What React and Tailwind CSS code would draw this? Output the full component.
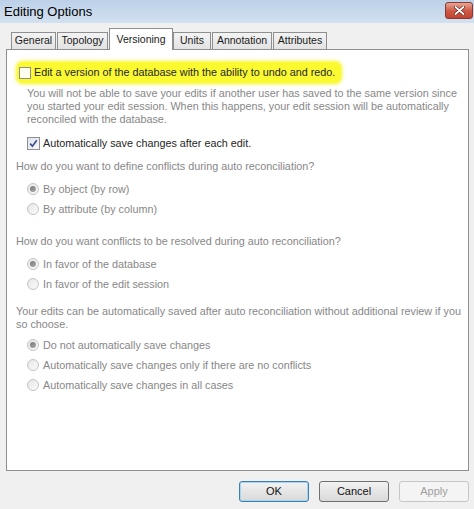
import React from "react";

const F = { fontFamily: '"Liberation Sans", Arial, sans-serif' };

function Radio({ checked }) {
  return (
    <span className="relative inline-flex h-[12px] w-[12px] shrink-0 items-center justify-center rounded-full border border-[#c4c4c4] bg-gradient-to-br from-[#e6e6e6] to-[#fbfbfb]">
      {checked && (
        <span className="h-[6px] w-[6px] rounded-full bg-gradient-to-br from-[#767676] to-[#adadad]" />
      )}
    </span>
  );
}

function Tab({ label, w, selected }) {
  if (selected) {
    return (
      <div
        className={`relative z-10 -mb-px flex h-[22px] items-start justify-center border border-b-0 border-[#8e8f8f] bg-white pt-[3px] text-[10.5px] text-[#1a1a1a] ${w}`}
      >
        {label}
      </div>
    );
  }
  return (
    <div
      className={`flex h-[17px] items-center justify-center border border-b-0 border-[#8e8f8f] bg-gradient-to-b from-[#f3f3f3] to-[#e3e3e3] text-[10.5px] text-[#1a1a1a] ${w}`}
    >
      {label}
    </div>
  );
}

function Btn({ children, variant }) {
  const base =
    "flex h-[21px] w-[70px] items-center justify-center rounded-[3px] border text-[11px]";
  if (variant === "default")
    return (
      <div className={`${base} border-[#3c7fb1] bg-gradient-to-b from-[#f2f2f2] to-[#d9d9d9] text-[#111] shadow-[inset_0_0_0_1px_#a9d4f0]`}>
        {children}
      </div>
    );
  if (variant === "disabled")
    return (
      <div className={`${base} border-[#c6c6c6] bg-[#f4f4f4] text-[#a0a0a0]`}>
        {children}
      </div>
    );
  return (
    <div className={`${base} border-[#707070] bg-gradient-to-b from-[#f2f2f2] to-[#d9d9d9] text-[#111]`}>
      {children}
    </div>
  );
}

export default function App() {
  const gray = "text-[#878787]";
  const dark = "text-[#262626]";
  return (
    <div
      style={F}
      className="flex h-[509px] w-[474px] flex-col overflow-hidden bg-[#f0f0f0]"
    >
      {/* title bar */}
      <div className="flex h-[23px] shrink-0 items-center justify-between bg-gradient-to-b from-[#bcd1e8] to-[#d3e1f0] pl-[4px] pr-[1px]">
        <span className="text-[13px] text-black">Editing Options</span>
        <div className="mt-[-3px] flex h-[17px] w-[28px] items-center justify-center rounded-[3px] border border-[#8a3a30] bg-gradient-to-b from-[#e5a596] via-[#cf5a48] to-[#c2442f]">
          <svg width="11" height="9" viewBox="0 0 11 9">
            <path d="M1.5 1 L9.5 8 M9.5 1 L1.5 8" stroke="#5a1b12" strokeWidth="3" strokeLinecap="round" />
            <path d="M1.5 1 L9.5 8 M9.5 1 L1.5 8" stroke="#ffffff" strokeWidth="1.8" strokeLinecap="round" />
          </svg>
        </div>
      </div>

      {/* tabs */}
      <div className="mt-[5px] flex items-end pl-[11px]">
        <Tab label="General" w="w-[45px]" />
        <div className="w-px" />
        <Tab label="Topology" w="w-[51px]" />
        <div className="w-[1px]" />
        <Tab label="Versioning" w="w-[64px]" selected />
        <Tab label="Units" w="w-[38px]" />
        <div className="w-[1px]" />
        <Tab label="Annotation" w="w-[60px]" />
        <div className="w-[1px]" />
        <Tab label="Attributes" w="w-[54px]" />
      </div>

      {/* panel */}
      <div className="ml-[6px] flex h-[422px] w-[463px] shrink-0 flex-col border border-[#8e8f8f] bg-white text-[10.8px]">
        {/* highlighted checkbox row */}
        <div className="mt-[12px] ml-[10px] flex h-[21px] w-[324px] items-center rounded-[6px] bg-[#fbfa30] pl-[2px] shadow-[0_0_3px_2px_#fbf972]">
          <span className="h-[12px] w-[12px] shrink-0 border border-[#8f8f8f] bg-[#fdfdf0]" />
          <span className={`ml-[3px] ${dark}`}>
            Edit a version of the database with the ability to undo and redo.
          </span>
        </div>

        <div className={`mt-[4px] ml-[20px] mr-[8px] leading-[13px] ${gray}`}>
          You will not be able to save your edits if another user has saved to the same version since you started your edit session. When this happens, your edit session will be automatically reconciled with the database.
        </div>

        <div className="mt-[7px] ml-[20px] flex h-[20px] items-center">
          <span className="flex h-[13px] w-[13px] shrink-0 items-center justify-center border border-[#8f8f8f] bg-gradient-to-br from-[#dfe3ee] to-[#f7f8fb]">
            <svg width="9" height="9" viewBox="0 0 9 9">
              <path d="M1.2 4.6 L3.4 7.2 L7.8 1.2" fill="none" stroke="#3d4f8a" strokeWidth="1.7" />
            </svg>
          </span>
          <span className={`ml-[3px] ${dark}`}>Automatically save changes after each edit.</span>
        </div>

        <div className={`mt-[6px] ml-[9px] h-[14px] leading-[14px] ${gray}`}>
          How do you want to define conflicts during auto reconciliation?
        </div>

        <div className="mt-[6px] ml-[20px] flex flex-col">
          <div className="flex h-[20px] items-center">
            <Radio checked />
            <span className={`ml-[4px] ${gray}`}>By object (by row)</span>
          </div>
          <div className="flex h-[20px] items-center">
            <Radio />
            <span className={`ml-[4px] ${gray}`}>By attribute (by column)</span>
          </div>
        </div>

        <div className={`mt-[15px] ml-[9px] h-[14px] leading-[14px] ${gray}`}>
          How do you want conflicts to be resolved during auto reconciliation?
        </div>

        <div className="mt-[6px] ml-[20px] flex flex-col">
          <div className="flex h-[20px] items-center">
            <Radio checked />
            <span className={`ml-[4px] ${gray}`}>In favor of the database</span>
          </div>
          <div className="flex h-[20px] items-center">
            <Radio />
            <span className={`ml-[4px] ${gray}`}>In favor of the edit session</span>
          </div>
        </div>

        <div className={`mt-[11px] ml-[9px] mr-[6px] leading-[13px] ${gray}`}>
          Your edits can be automatically saved after auto reconciliation without additional review if you so choose.
        </div>

        <div className="mt-[4px] ml-[20px] flex flex-col">
          <div className="flex h-[20px] items-center">
            <Radio checked />
            <span className={`ml-[4px] ${gray}`}>Do not automatically save changes</span>
          </div>
          <div className="flex h-[20px] items-center">
            <Radio />
            <span className={`ml-[4px] ${gray}`}>Automatically save changes only if there are no conflicts</span>
          </div>
          <div className="flex h-[20px] items-center">
            <Radio />
            <span className={`ml-[4px] ${gray}`}>Automatically save changes in all cases</span>
          </div>
        </div>
      </div>

      {/* buttons */}
      <div className="mt-[10px] flex justify-end gap-[10px] pr-[5px]">
        <Btn variant="default">OK</Btn>
        <Btn>Cancel</Btn>
        <Btn variant="disabled">Apply</Btn>
      </div>
    </div>
  );
}
